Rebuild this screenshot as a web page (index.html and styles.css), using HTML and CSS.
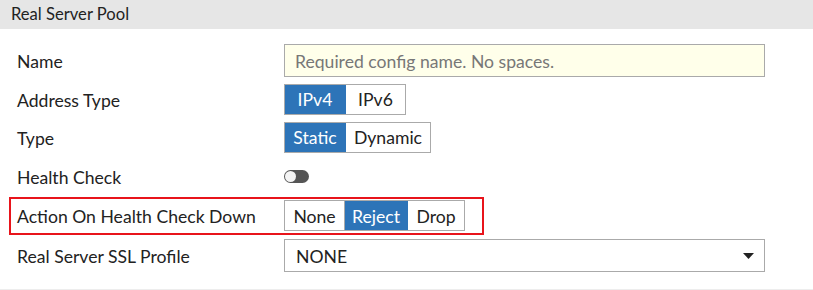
FILE: index.html
```html
<!DOCTYPE html>
<html>
<head>
<meta charset="utf-8">
<link rel="stylesheet" href="styles.css">
</head>
<body>
<div class="panel">
  <div class="panel-header">Real Server Pool</div>
  <div class="form">
    <div class="row row-name">
      <label class="label">Name</label>
      <input class="text-input" type="text" placeholder="Required config name. No spaces.">
    </div>
    <div class="row row-addr">
      <label class="label">Address Type</label>
      <div class="btn-group">
        <span class="btn active w-ipv4">IPv4</span><span class="btn w-ipv6">IPv6</span>
      </div>
    </div>
    <div class="row row-type">
      <label class="label">Type</label>
      <div class="btn-group">
        <span class="btn active w-static">Static</span><span class="btn w-dynamic">Dynamic</span>
      </div>
    </div>
    <div class="row row-health">
      <label class="label">Health Check</label>
      <span class="toggle"><span class="knob"></span></span>
    </div>
    <div class="row row-action">
      <label class="label">Action On Health Check Down</label>
      <div class="btn-group">
        <span class="btn w-none">None</span><span class="btn active w-reject">Reject</span><span class="btn w-drop">Drop</span>
      </div>
    </div>
    <div class="row row-ssl">
      <label class="label">Real Server SSL Profile</label>
      <div class="select">
        <span class="select-value">NONE</span>
        <svg class="caret" width="11" height="6" viewBox="0 0 11 6"><path d="M0 0 H11 L5.5 6 Z" fill="#222"/></svg>
      </div>
    </div>
  </div>
</div>
</body>
</html>
```
FILE: styles.css
```css
html, body {
  margin: 0;
  padding: 0;
  background: #fff;
}
body {
  font-family: Lato, "Open Sans", sans-serif;
  font-size: 17.6px;
  color: #222;
  width: 813px;
  height: 290px;
  overflow: hidden;
}
.panel {
  display: flex;
  flex-direction: column;
  height: 290px;
  border-bottom: 1px solid #ededed;
  box-sizing: border-box;
}
.panel-header {
  background: #e6e6e6;
  height: 29px;
  line-height: 28px;
  padding-left: 11px;
  font-size: 16.6px;
  color: #222;
  box-sizing: border-box;
}
.form {
  display: flex;
  flex-direction: column;
  padding-top: 15px;
}
.row {
  display: flex;
  align-items: center;
  padding-left: 17px;
}
.label {
  width: 267px;
  flex: none;
  padding-top: 2px;
}
.row-name { height: 33px; }
.row-addr { height: 30px; margin-top: 7px; }
.row-type { height: 30px; margin-top: 8px; }
.row-health { height: 30px; margin-top: 9px; }
.row-action {
  align-self: flex-start;
  margin-top: 6px;
  margin-left: 9px;
  padding: 1px 17px 2px 6px;
  border: 2px solid #e8141b;
}
.row-ssl { height: 33px; margin-top: 4px; }

.text-input {
  width: 481px;
  height: 33px;
  box-sizing: border-box;
  border: 1px solid #aaa;
  background: #ffffea;
  font-family: inherit;
  font-size: 17.6px;
  padding: 1px 10px 0;
  color: #222;
  outline: none;
  margin: 0;
}
.text-input::placeholder {
  color: #777;
}
.btn-group {
  display: flex;
  border: 1px solid #aaa;
  height: 31px;
  box-sizing: border-box;
}
.btn {
  display: flex;
  align-items: center;
  justify-content: center;
  background: #fff;
  color: #222;
  box-sizing: border-box;
  padding-top: 1px;
}
.btn + .btn { border-left: 1px solid #aaa; }
.btn.active {
  background: #2d74b8;
  color: #fff;
}
.btn.active + .btn { border-left-color: #2d74b8; }
.w-ipv4 { width: 60px; }
.w-ipv6 { width: 60px; }
.w-static { width: 60px; }
.w-dynamic { width: 85px; }
.w-none { width: 59px; }
.w-reject { width: 63px; }
.w-drop { width: 57px; }

.toggle {
  position: relative;
  width: 25px;
  height: 13px;
  border-radius: 7px;
  background: #555;
  display: inline-block;
}
.knob {
  position: absolute;
  left: 1px;
  top: 1px;
  width: 11px;
  height: 11px;
  border-radius: 50%;
  background: #f4f4f4;
}
.select {
  width: 481px;
  height: 33px;
  box-sizing: border-box;
  border: 1px solid #aaa;
  display: flex;
  align-items: center;
  justify-content: space-between;
  padding: 1px 10px 0 11px;
}
.caret { display: block; }
```
